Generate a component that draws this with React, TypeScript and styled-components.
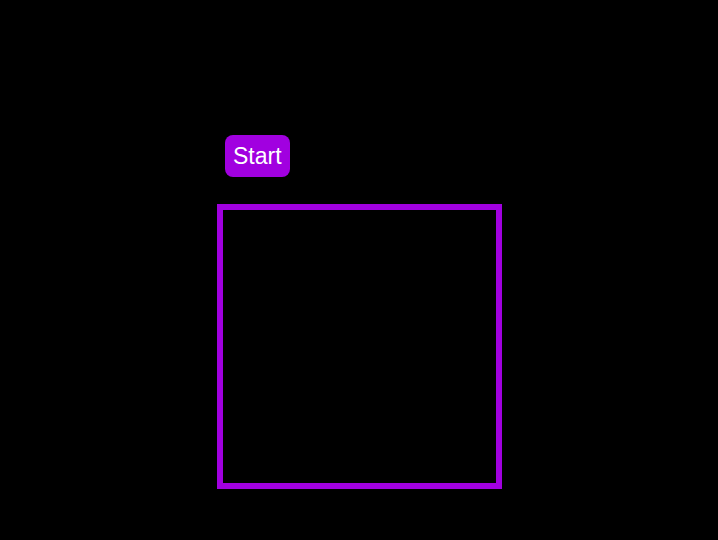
import React, { useState } from 'react';
import styled, { createGlobalStyle } from 'styled-components';

const GlobalStyle = createGlobalStyle`
  html, body {
    margin: 0;
    padding: 0;
    background-color: #000000;
    font-family: "Liberation Sans", Arial, sans-serif;
  }
`

const Page = styled.div`
  width: 100%;
  height: 540px;
  display: flex;
  justify-content: center;
  padding-top: 135px;
  box-sizing: border-box;
`

const Column = styled.div`
  width: 285px;
  display: flex;
  flex-direction: column;
  align-items: flex-start;
`

const StartBtn = styled.button`
  margin-left: 8px;
  height: 42px;
  padding: 0 8.5px;
  background-color: #a100e0;
  color: #ffffff;
  border: none;
  border-radius: 8px;
  font-family: "Liberation Sans", Arial, sans-serif;
  font-size: 23px;
  cursor: pointer;
`

const Board = styled.div<{ $running: boolean }>`
  margin-top: 27px;
  width: 285px;
  height: 285px;
  box-sizing: border-box;
  border: 6px solid #a100e0;
  background-color: ${p => (p.$running ? '#0a0010' : '#000000')};
`

const App: React.FC = () => {
  const [running, setRunning] = useState(false)

  return (
    <>
      <GlobalStyle />
      <Page>
        <Column>
          <StartBtn type="button" onClick={() => setRunning(!running)}>Start</StartBtn>
          <Board $running={running} />
        </Column>
      </Page>
    </>
  )
}

export default App
